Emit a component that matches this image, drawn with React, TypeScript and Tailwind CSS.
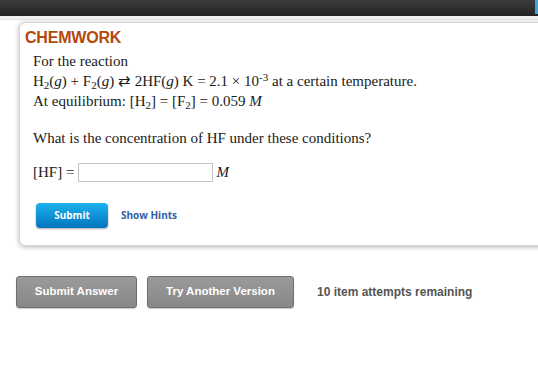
import React from "react";

export default function App() {
  const serif = { fontFamily: '"Liberation Serif", "Times New Roman", serif' };
  const Sub = ({ c }: { c: string }) => <sub className="text-[11px]">{c}</sub>;
  return (
    <div className="w-[538px] h-[381px] bg-white overflow-hidden relative" style={{ fontFamily: '"Liberation Sans", Arial, sans-serif' }}>
      <div className="h-[16px] bg-gradient-to-b from-[#3c3c3c] to-[#222222] relative">
        <div className="absolute right-0 top-0 w-[3px] h-[14px] bg-[#39a7dd]" />
      </div>
      <div className="h-[4px] bg-[#f1f1f1] border-b border-[#e2e2e2]" />
      <div className="pl-[19px] pt-[2px]">
        <div className="w-[530px] h-[224px] bg-white rounded-l-[6px] border border-[#d6d6d6] shadow-[0_1px_5px_rgba(0,0,0,0.3)] pl-[5px] pt-[5px]">
          <div className="text-[#b4470b] font-bold text-[16px] leading-[19px] tracking-[-0.2px]">CHEMWORK</div>
          <div className="pl-[8px] pt-[4px] text-[15px] leading-[20px] text-[#1a1a1a]" style={serif}>
            <div>For the reaction</div>
            <div>
              H<Sub c="2" />(<i>g</i>) + F<Sub c="2" />(<i>g</i>) ⇄ 2HF(<i>g</i>) K = 2.1 × 10<sup className="text-[11px]">-3</sup> at a certain temperature.
            </div>
            <div>
              At equilibrium: [H<Sub c="2" />] = [F<Sub c="2" />] = 0.059 <i>M</i>
            </div>
            <div className="mt-[17px]">What is the concentration of HF under these conditions?</div>
            <div className="mt-[14px] flex items-center h-[20px]">
              <span>[HF] =</span>
              <span className="ml-[4px] inline-block w-[135px] h-[19px] border border-[#c4c4c4] bg-white" />
              <i className="ml-[3px]">M</i>
            </div>
          </div>
          <div className="flex items-center pl-[11px] mt-[21px]">
            <button className="w-[72px] h-[25px] rounded-[4px] bg-gradient-to-b from-[#1eb2ee] to-[#0375bf] text-white text-[10px] font-bold shadow-[0_1px_2px_rgba(0,0,0,0.35)]" style={{ fontFamily: '"Open Sans", sans-serif' }}>
              Submit
            </button>
            <span className="ml-[13px] text-[#2e5ea6] text-[10px] font-bold" style={{ fontFamily: '"Open Sans", sans-serif' }}>Show Hints</span>
          </div>
        </div>
      </div>
      <div className="flex items-center pl-[16px] mt-[30px]">
        <button className="w-[121px] h-[32px] rounded-[3px] border border-[#6f6f6f] bg-gradient-to-b from-[#9a9a9a] to-[#888888] text-white text-[11.5px] font-bold shadow-[0_1px_1px_rgba(0,0,0,0.2)]">
          Submit Answer
        </button>
        <button className="ml-[10px] w-[147px] h-[32px] rounded-[3px] border border-[#6f6f6f] bg-gradient-to-b from-[#9a9a9a] to-[#888888] text-white text-[11.5px] font-bold shadow-[0_1px_1px_rgba(0,0,0,0.2)]">
          Try Another Version
        </button>
        <span className="ml-[23px] text-[12px] font-bold text-[#555555]">10 item attempts remaining</span>
      </div>
    </div>
  );
}
